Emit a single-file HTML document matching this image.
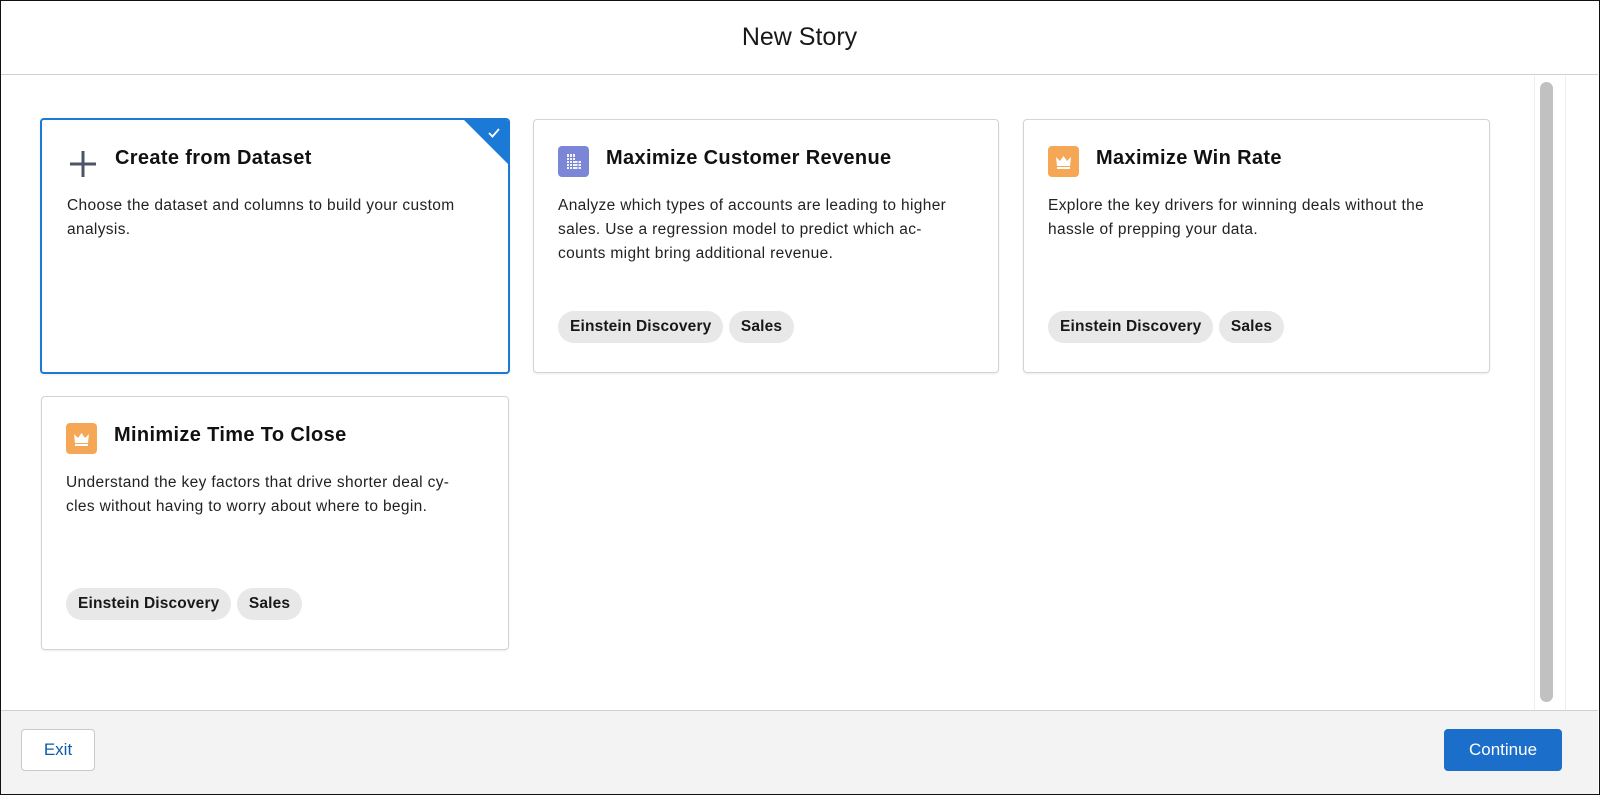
<!DOCTYPE html>
<html><head><meta charset="utf-8"><style>
*{box-sizing:border-box;margin:0;padding:0}
body{width:1600px;height:795px;overflow:hidden;font-family:"Liberation Sans",sans-serif;background:#fff;color:#181818}
.frame{position:absolute;left:0;top:0;width:1600px;height:795px;border:1px solid #111;}
.hdr{position:absolute;left:1px;top:1px;width:1597px;height:74px;border-bottom:1px solid #d0d0d0;text-align:center;font-size:25px;line-height:72px;color:#181818}
.ftr{position:absolute;left:1px;top:710px;width:1597px;height:84px;background:#f3f3f3;border-top:1px solid #d0d0d0}
.btn{position:absolute;top:18px;height:42px;border-radius:4px;font-size:17px;line-height:40px;text-align:center}
.exit{left:20px;width:74px;background:#fff;border:1px solid #c9c9c9;color:#0b5cab}
.cont{left:1443px;width:118px;background:#1b6fcb;border:1px solid #1b6fcb;color:#fff}
.track{position:absolute;left:1534px;top:76px;width:32px;height:634px;border-left:1px solid #eee;border-right:1px solid #eee}
.thumb{position:absolute;left:1540px;top:82px;width:13px;height:620px;border-radius:7px;background:#c1c1c1}
.card{position:absolute;width:466px;height:254px;border:1px solid #d4d4d4;border-radius:4px;background:#fff;box-shadow:0 1px 2px rgba(0,0,0,.08);overflow:hidden}
.card.sel{border:2px solid #1b7ad6}
.ttl{position:absolute;left:72px;top:27px;font-size:20px;font-weight:bold;color:#111;letter-spacing:0.35px}
.ic{position:absolute;left:24px;top:26px;width:31px;height:31px;border-radius:4px}
.desc{position:absolute;left:24px;top:74px;width:440px;white-space:nowrap;font-size:15.5px;line-height:24px;color:#222;letter-spacing:0.35px}
.pills{position:absolute;left:24px;top:191px}
.pill{display:inline-block;height:32px;line-height:32px;padding:0 12px;border-radius:16px;background:#e8e8e8;font-size:15.5px;font-weight:bold;color:#181818;margin-right:1px;letter-spacing:0.15px}
.corner{position:absolute;right:0;top:0;width:0;height:0;border-top:44px solid #1b7ad6;border-left:44px solid transparent}
</style></head><body>
<div class="frame"></div>
<div class="hdr">New Story</div>

<div class="card sel" style="left:40px;top:118px;width:470px;height:256px">
 <div class="corner"></div>
 <svg style="position:absolute;right:7px;top:7px" width="14" height="12" viewBox="0 0 14 12"><path d="M2 6l3.5 3.5L12 2" stroke="#fff" stroke-width="1.8" fill="none"/></svg>
 <svg style="position:absolute;left:26px;top:29px" width="30" height="30" viewBox="0 0 30 30"><path d="M15 2v26M2 15h26" stroke="#4b5566" stroke-width="3"/></svg>
 <div class="ttl" style="left:73px">Create from Dataset</div>
 <div class="desc" style="left:25px">Choose the dataset and columns to build your custom<br>analysis.</div>
</div>

<div class="card" style="left:533px;top:119px">
 <div class="ic" style="background:#7b86d6"><svg width="31" height="31" viewBox="0 0 31 31"><g fill="#fff"><rect x="9" y="8" width="8" height="15" opacity=".9"/><rect x="17" y="15" width="6" height="8" opacity=".9"/></g><g stroke="#7b86d6" stroke-width="1"><path d="M11.5 8v15M14.5 8v15M9 11.5h8M9 14.5h14M9 17.5h14M9 20.5h14M20 15v8"/></g></svg></div>
 <div class="ttl">Maximize Customer Revenue</div>
 <div class="desc">Analyze which types of accounts are leading to higher<br>sales. Use a regression model to predict which ac-<br>counts might bring additional revenue.</div>
 <div class="pills"><span class="pill">Einstein Discovery</span> <span class="pill">Sales</span></div>
</div>

<div class="card" style="left:1023px;top:119px;width:467px">
 <div class="ic" style="background:#f5a755"><svg width="31" height="31" viewBox="0 0 31 31"><path d="M8 11l4 4 3.5-5 3.5 5 4-4-1 9H9z" fill="#fff"/><rect x="9" y="21" width="13" height="2" fill="#fff"/></svg></div>
 <div class="ttl">Maximize Win Rate</div>
 <div class="desc">Explore the key drivers for winning deals without the<br>hassle of prepping your data.</div>
 <div class="pills"><span class="pill">Einstein Discovery</span> <span class="pill">Sales</span></div>
</div>

<div class="card" style="left:41px;top:396px;width:468px">
 <div class="ic" style="background:#f5a755"><svg width="31" height="31" viewBox="0 0 31 31"><path d="M8 11l4 4 3.5-5 3.5 5 4-4-1 9H9z" fill="#fff"/><rect x="9" y="21" width="13" height="2" fill="#fff"/></svg></div>
 <div class="ttl">Minimize Time To Close</div>
 <div class="desc">Understand the key factors that drive shorter deal cy-<br>cles without having to worry about where to begin.</div>
 <div class="pills"><span class="pill">Einstein Discovery</span> <span class="pill">Sales</span></div>
</div>

<div class="track"></div><div class="thumb"></div>

<div class="ftr">
 <div class="btn exit">Exit</div>
 <div class="btn cont">Continue</div>
</div>
</body></html>
